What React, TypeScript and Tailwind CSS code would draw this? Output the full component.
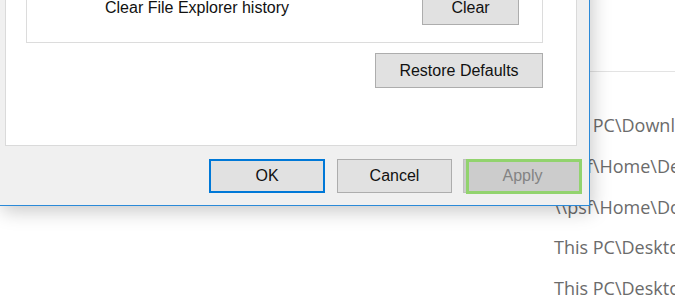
const rows = [
  "This PC\\Downloads",
  "\\\\psf\\Home\\Desktop",
  "\\\\psf\\Home\\Documents",
  "This PC\\Desktop",
  "This PC\\Desktop",
];

export default function App() {
  return (
    <div className="relative h-[301px] w-[675px] overflow-hidden bg-white font-['Liberation_Sans',Arial,sans-serif] text-[16px] text-[#111]">
      {/* explorer list behind the dialog */}
      <div className="pt-[71px] font-['Open_Sans','Noto_Sans',sans-serif] text-[18px] text-[#6b6b6b]">
        <div className="h-px bg-[#e3e3e3]" />
        <ul className="ml-[554px] mt-[33px] whitespace-nowrap leading-[40.75px]">
          {rows.map((r, i) => (
            <li key={i}>{r}</li>
          ))}
        </ul>
      </div>

      {/* folder options dialog */}
      <div className="absolute left-0 top-[-40px] w-[590px] border-b border-r border-[#2b8ad8] bg-[#f0f0f0] shadow-[2px_5px_18px_rgba(0,0,0,0.22)]">
        <div className="ml-[5px] w-[572px] border border-[#dadada] bg-white pb-[57px]">
          <div className="ml-[20px] mt-[9px] w-[517px] border border-[#dcdcdc] pb-[17px] pt-[19px]">
            <div className="flex items-center">
              <span className="pl-[78px]">Clear File Explorer history</span>
              <button
                type="button"
                className="ml-auto mr-[23px] flex h-[35px] w-[97px] items-center justify-center border border-[#adadad] bg-[#e1e1e1]"
              >
                Clear
              </button>
            </div>
          </div>
          <div className="ml-[20px] mt-[10px] flex w-[517px] justify-end">
            <button
              type="button"
              className="flex h-[35px] w-[168px] items-center justify-center border border-[#adadad] bg-[#e1e1e1]"
            >
              Restore Defaults
            </button>
          </div>
        </div>

        <div className="flex justify-end gap-[11px] pb-[12px] pr-[7px] pt-[13px]">
          <button
            type="button"
            className="mr-[1px] flex h-[34px] w-[116px] items-center justify-center border-2 border-[#0078d7] bg-[#e1e1e1]"
          >
            OK
          </button>
          <button
            type="button"
            className="flex h-[34px] w-[115px] items-center justify-center border border-[#adadad] bg-[#e1e1e1]"
          >
            Cancel
          </button>
          <div className="relative">
            <button
              type="button"
              disabled
              className="flex h-[34px] w-[119px] items-center justify-center border border-[#bfbfbf] bg-[#cccccc] text-[#838383]"
            >
              Apply
            </button>
            <span className="absolute bottom-[-1px] left-[3px] right-0 top-0 border-[3px] border-[#92d36e]" />
          </div>
        </div>
      </div>
    </div>
  );
}
